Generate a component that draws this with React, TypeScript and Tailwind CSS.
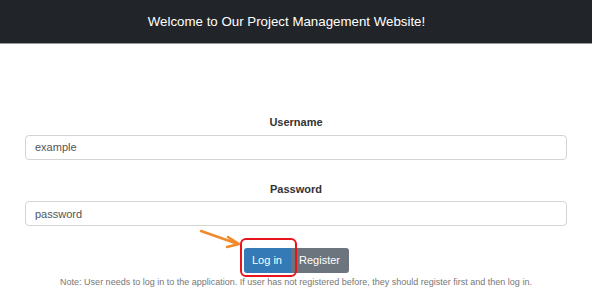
export default function App() {
  return (
    <div className="w-[592px] h-[292px] bg-white overflow-hidden font-['Liberation_Sans',Arial,sans-serif]">
      <header className="h-[44px] bg-[#212529] border-b border-[#9a9a9a] flex items-center justify-center pr-[19px]">
        <h1 className="text-white text-[13.3px] leading-none">Welcome to Our Project Management Website!</h1>
      </header>

      <div className="px-[25px] pt-[73px]">
        <label className="block text-center text-[11px] font-bold text-[#333] leading-none mb-[6px]">Username</label>
        <input
          readOnly
          value="example"
          className="w-full h-[25px] border border-[#d4d4d4] rounded-[4px] px-[9px] text-[11px] text-[#555] outline-none"
        />

        <label className="block text-center text-[11px] font-bold text-[#333] leading-none mt-[24px] mb-[6px]">Password</label>
        <input
          readOnly
          value="password"
          className="w-full h-[25px] border border-[#d4d4d4] rounded-[4px] px-[9px] text-[11px] text-[#555] outline-none"
        />

        <div className="flex justify-center mt-[22px]">
          <div className="relative flex">
            <button className="h-[25px] w-[47px] bg-[#337ab7] text-white text-[11px] rounded-l-[3px]">Log in</button>
            <button className="h-[25px] w-[58px] bg-[#6c757d] text-white text-[11px] rounded-r-[3px]">Register</button>
            <div className="absolute left-[-4px] top-[-10px] w-[57px] h-[39px] border-2 border-[#e8141c] rounded-[6px]" />
            <svg className="absolute left-[-45px] top-[-19px]" width="44" height="20" viewBox="0 0 44 20">
              <path d="M2 2 L39 15 M29 8 L40 15 L28 18" stroke="#f08a2c" strokeWidth="2.5" fill="none" strokeLinecap="round" strokeLinejoin="round" />
            </svg>
          </div>
        </div>
        <p className="text-center text-[9px] text-[#777] leading-none mt-[5px] whitespace-nowrap">
          Note: User needs to log in to the application. If user has not registered before, they should register first and then log in.
        </p>
      </div>
    </div>
  );
}
